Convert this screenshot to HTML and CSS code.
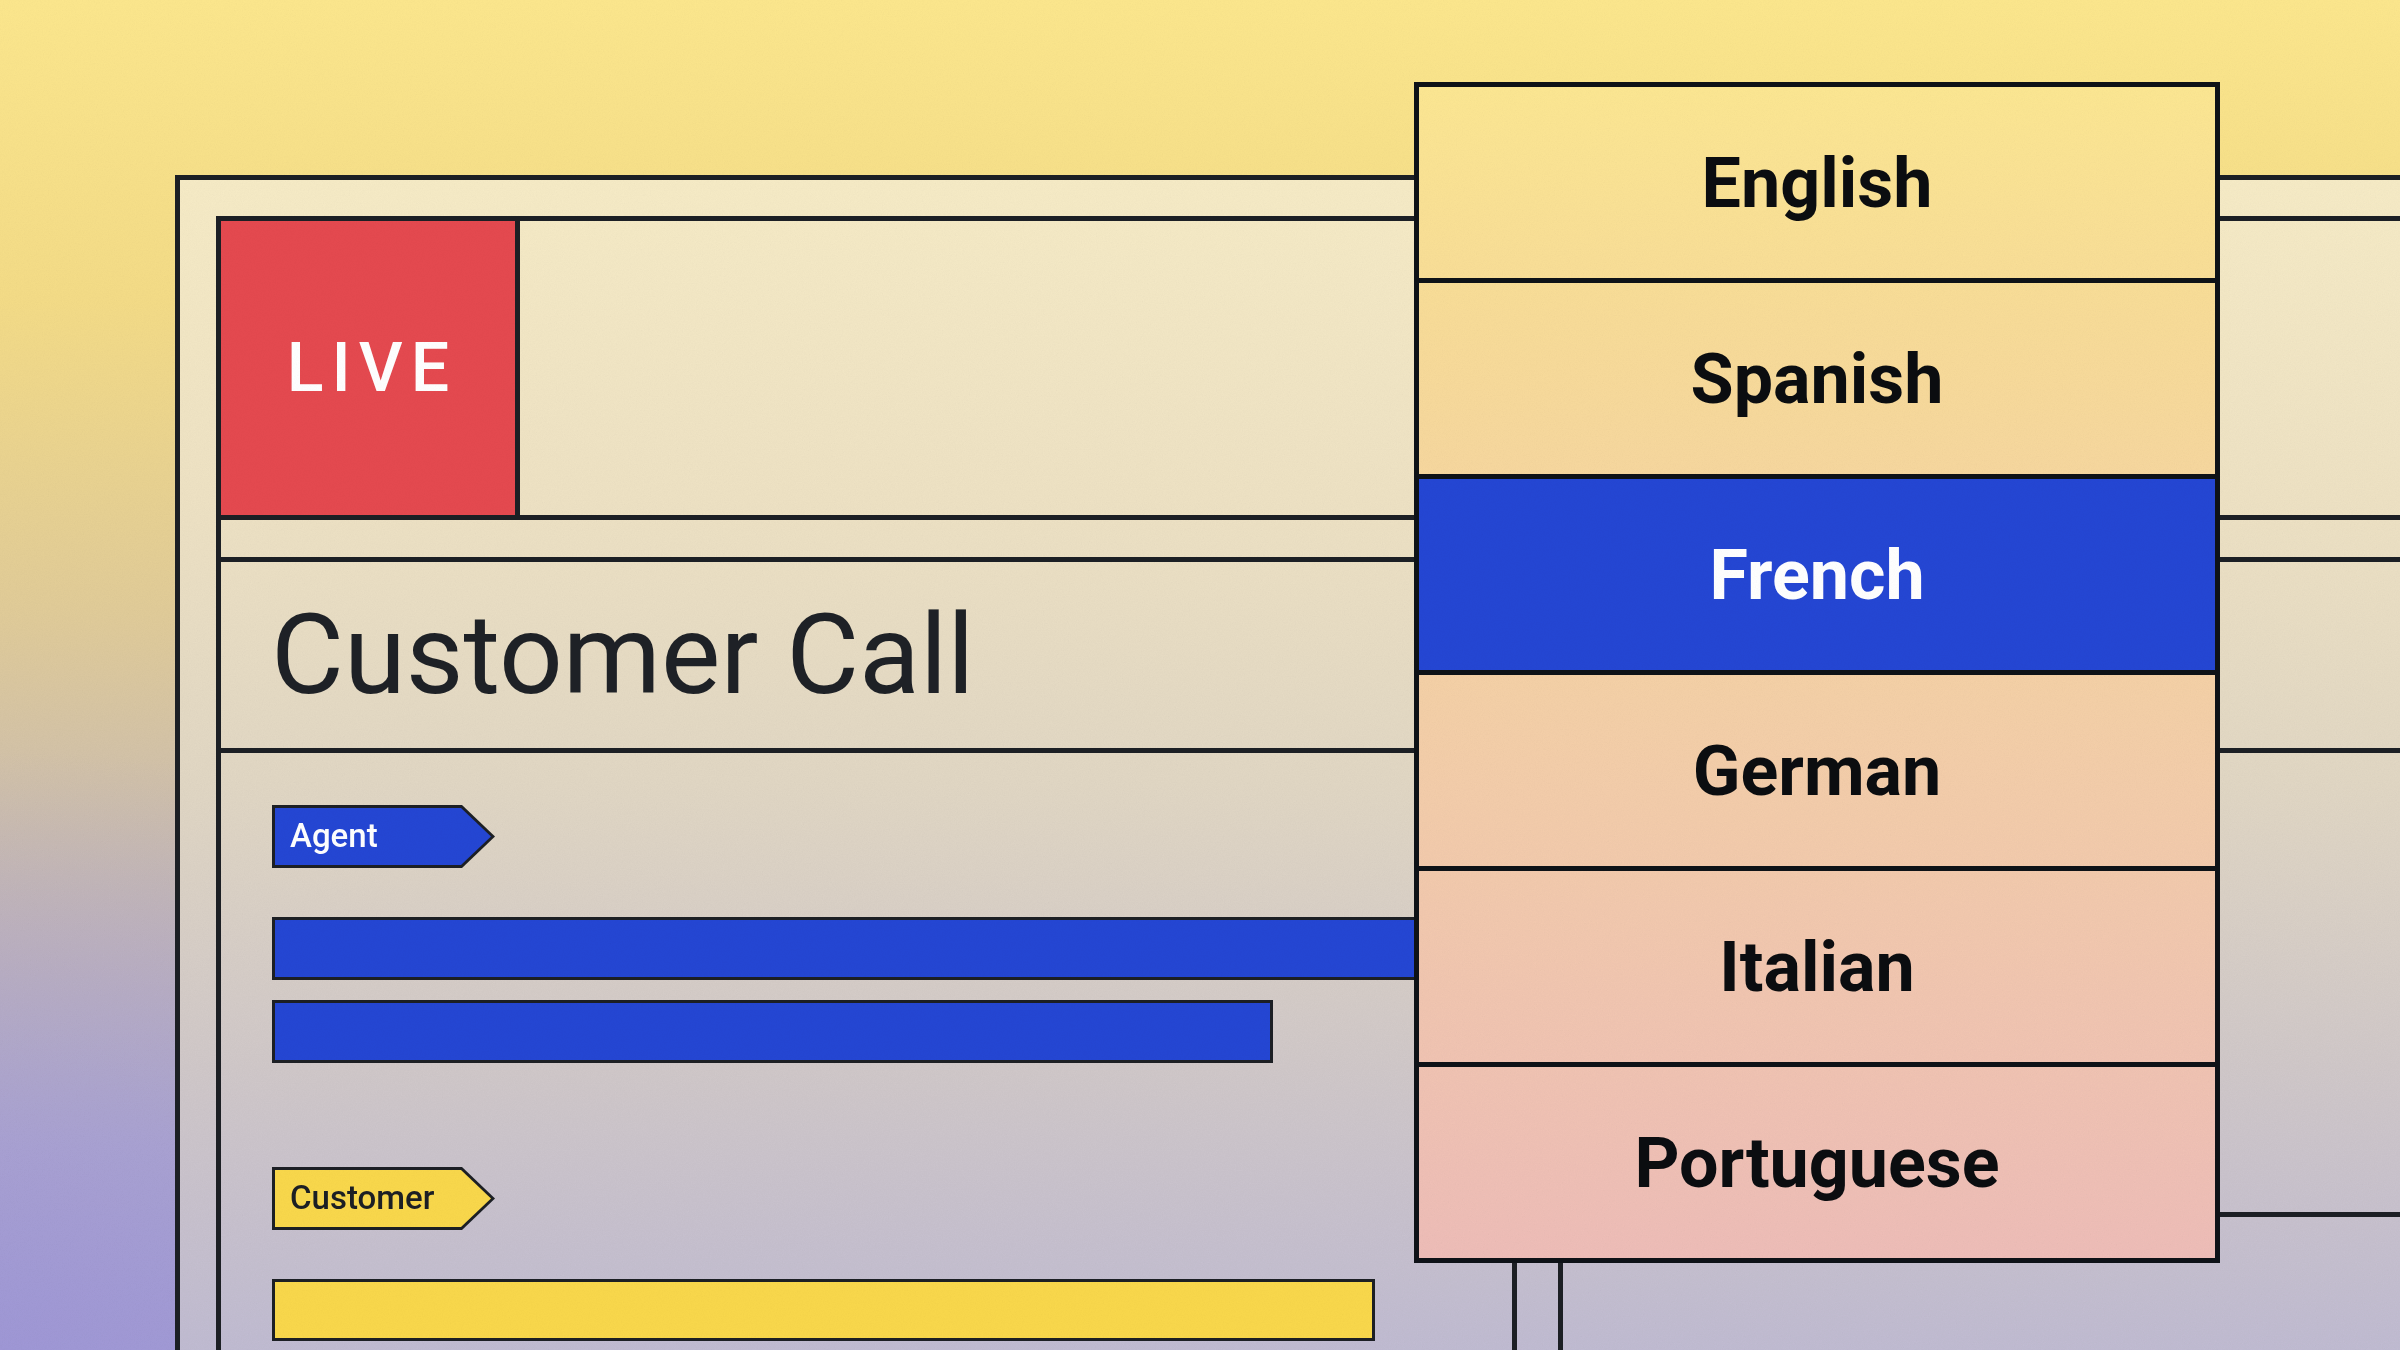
FILE: index.html
```html
<!DOCTYPE html>
<html lang="en">
<head>
<meta charset="utf-8">
<title>Customer Call – Language</title>
<link rel="stylesheet" href="styles.css">
</head>
<body>
<div class="scene">
  <div class="frame-outer">
    <div class="frame-inner">
      <div class="header-row">
        <div class="live"><span class="live-text">LIVE</span></div>
        <div class="header-fill"></div>
      </div>
      <div class="band"></div>
      <div class="title-row">
        <h1 class="title">Customer Call</h1>
      </div>
      <div class="content">
        <div class="transcript">
          <div class="tag tag-agent"><span class="tag-inner">Agent</span></div>
          <div class="bar bar-blue bar-first" style="width:1240px"></div>
          <div class="bar bar-blue bar-second" style="width:1001px"></div>
          <div class="tag tag-customer"><span class="tag-inner">Customer</span></div>
          <div class="bar bar-yellow bar-first" style="width:1103px"></div>
        </div>
        <div class="rail"></div>
        <div class="side">
          <div class="side-box"></div>
        </div>
      </div>
    </div>
  </div>

  <ul class="dropdown">
    <li class="option">English</li>
    <li class="option">Spanish</li>
    <li class="option option-selected">French</li>
    <li class="option">German</li>
    <li class="option">Italian</li>
    <li class="option">Portuguese</li>
  </ul>

  <svg class="grain" width="2400" height="1350" aria-hidden="true">
    <filter id="grainFilter">
      <feTurbulence type="fractalNoise" baseFrequency="0.85" numOctaves="2" stitchTiles="stitch"/>
      <feColorMatrix type="saturate" values="0"/>
    </filter>
    <rect width="2400" height="1350" filter="url(#grainFilter)"/>
  </svg>
</div>
</body>
</html>
```

FILE: styles.css
```css
* {
  box-sizing: border-box;
}

html, body {
  margin: 0;
  padding: 0;
}

body {
  width: 2400px;
  height: 1350px;
  overflow: hidden;
  font-family: Roboto, "Liberation Sans", Arial, sans-serif;
  color: #1c1f24;
}

.scene {
  position: relative;
  width: 2400px;
  height: 1350px;
  overflow: hidden;
  padding: 175px 0 0 175px;
  background:
    radial-gradient(ellipse 900px 600px at 0% 100%, rgba(150, 142, 215, 0.55), rgba(150, 142, 215, 0) 100%),
    linear-gradient(180deg, #fce78d 0%, #f4dc87 22%, #e1cc98 45%, #c8bbb4 65%, #b2abd0 85%, #a9a2d5 100%);
}

/* ---------- frames ---------- */

.frame-outer {
  width: 2300px;
  min-height: 1300px;
  border-top: 5px solid #1c1f24;
  border-left: 5px solid #1c1f24;
  padding: 36px 0 0 36px;
  background: linear-gradient(180deg, #f6ebc6 0%, #eee2c4 22%, #e1d7c4 42%, #d0c8c9 62%, #c0bbd2 82%, #b7b2d8 100%);
}

.frame-inner {
  min-height: 1300px;
  border-top: 5px solid #1c1f24;
  border-left: 5px solid #1c1f24;
}

.header-row {
  display: flex;
  height: 299px;
  border-bottom: 5px solid #1c1f24;
}

.live {
  width: 299px;
  height: 294px;
  background: #e5494f;
  border-right: 5px solid #1c1f24;
  display: flex;
  align-items: center;
  justify-content: center;
}

.live-text {
  color: #ffffff;
  font-family: Roboto, "Liberation Sans", sans-serif;
  font-weight: 500;
  font-size: 68px;
  line-height: 1;
  letter-spacing: 8px;
  padding-left: 8px;
}

.header-fill {
  flex: 1;
}

.band {
  height: 42px;
  border-bottom: 5px solid #1c1f24;
}

.title-row {
  height: 191px;
  border-bottom: 5px solid #1c1f24;
  display: flex;
  align-items: center;
  padding-left: 50px;
}

.title {
  margin: 0;
  font-family: Roboto, "Liberation Sans", sans-serif;
  font-weight: 400;
  font-size: 112px;
  line-height: 1;
  color: #1e2126;
}

/* ---------- content ---------- */

.content {
  display: flex;
  min-height: 700px;
}

.transcript {
  width: 1291px;
  padding: 52px 0 0 51px;
  display: flex;
  flex-direction: column;
  align-items: flex-start;
}

.rail {
  width: 51px;
  border-left: 5px solid #1c1f24;
  border-right: 5px solid #1c1f24;
}

.side {
  flex: 1;
  padding-top: 459px;
}

.side-box {
  height: 400px;
  border-top: 5px solid #1c1f24;
}

.tag {
  width: 223px;
  height: 63px;
  padding: 3px 0 3px 3px;
  background: #1c1f24;
  clip-path: polygon(0 0, calc(100% - 33px) 0, 100% 50%, calc(100% - 33px) 100%, 0 100%);
  display: flex;
}

.tag-inner {
  width: 216px;
  height: 57px;
  display: flex;
  align-items: center;
  padding: 0 0 3px 15px;
  font-family: Roboto, "Liberation Sans", sans-serif;
  font-weight: 500;
  font-size: 33px;
  line-height: 1;
  clip-path: polygon(0 0, calc(100% - 30px) 0, 100% 50%, calc(100% - 30px) 100%, 0 100%);
}

.tag-agent .tag-inner {
  background: #2446d4;
  color: #ffffff;
}

.tag-customer {
  margin-top: 104px;
}

.tag-customer .tag-inner {
  background: #f9d84b;
  color: #1c1f24;
}

.bar {
  height: 63px;
  border: 3px solid #1c1f24;
}

.bar-first {
  margin-top: 49px;
}

.bar-second {
  margin-top: 20px;
}

.bar-blue {
  background: #2446d4;
}

.bar-yellow {
  background: #f9d84b;
  height: 62px;
}

/* ---------- dropdown ---------- */

.dropdown {
  position: absolute;
  left: 1414px;
  top: 82px;
  width: 806px;
  margin: 0;
  padding: 0;
  list-style: none;
  border: 5px solid #0e1217;
  background: linear-gradient(180deg, #fce792 0%, #f8dc98 20%, #f5d3a4 45%, #f2c9ae 70%, #eebdb8 100%);
}

.option {
  height: 191px;
  display: flex;
  align-items: center;
  justify-content: center;
  font-family: Roboto, "Liberation Sans", sans-serif;
  font-weight: 700;
  font-size: 70px;
  line-height: 1;
  color: #0b0d10;
}

.option + .option {
  height: 196px;
  border-top: 5px solid #0e1217;
}

.option-selected {
  background: #2446d4;
  color: #ffffff;
}

/* ---------- grain ---------- */

.grain {
  position: absolute;
  left: 0;
  top: 0;
  pointer-events: none;
  opacity: 0.07;
  mix-blend-mode: multiply;
}
```
